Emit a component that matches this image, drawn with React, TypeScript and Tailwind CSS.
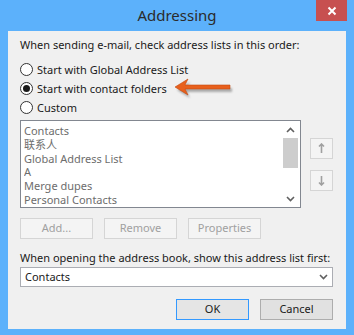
import React from "react";

const font = { fontFamily: '"Noto Sans", "Noto Sans CJK SC", sans-serif' };

function Radio({ checked, label }: { checked?: boolean; label: string }) {
  return (
    <div className="flex items-center h-[19px]">
      <div className="w-[13px] h-[13px] rounded-full border border-[#333333] bg-white flex items-center justify-center">
        {checked && <div className="w-[7px] h-[7px] rounded-full bg-[#1a1a1a]" />}
      </div>
      <span className="ml-[4px] text-[11px] text-[#1a1a1a] leading-[16px]">{label}</span>
    </div>
  );
}

function Chevron({ up }: { up?: boolean }) {
  return (
    <svg width="9" height="6" viewBox="0 0 9 6">
      <path d={up ? "M1 5 L4.5 1.5 L8 5" : "M1 1 L4.5 4.5 L8 1"} stroke="#606060" strokeWidth="1.6" fill="none" />
    </svg>
  );
}

function DisabledButton({ label }: { label: string }) {
  return (
    <div className="w-[73px] h-[21px] border border-[#d5d5d5] bg-[#f4f4f4] flex items-center justify-center text-[11px] text-[#a0a0a0]">
      {label}
    </div>
  );
}

export default function App() {
  const items = ["Contacts", "联系人", "Global Address List", "A", "Merge dupes", "Personal Contacts"];
  return (
    <div className="w-[354px] h-[335px] bg-[#5cb1fb] flex flex-col overflow-hidden" style={font}>
      <div className="h-[31px] shrink-0 relative flex items-center justify-center">
        <span className="text-[15px] text-[#2b2b2b]">Addressing</span>
        <div className="absolute right-[7px] top-0 w-[31px] h-[21px] bg-[#c75050] flex items-center justify-center">
          <svg width="10" height="10" viewBox="0 0 10 10">
            <path d="M1.5 1.5 L8.5 8.5 M8.5 1.5 L1.5 8.5" stroke="white" strokeWidth="2" />
          </svg>
        </div>
      </div>
      <div className="mx-[8px] mb-[6px] flex-1 min-h-0 bg-[#f0f0f0] pl-[12px] pr-[13px] pt-[6px] flex flex-col relative">
        <div className="text-[11px] text-[#1a1a1a] leading-[16px]">When sending e-mail, check address lists in this order:</div>
        <div className="mt-[7px] flex flex-col">
          <Radio label="Start with Global Address List" />
          <Radio checked label="Start with contact folders" />
          <Radio label="Custom" />
        </div>
        <div className="mt-[3px] flex">
          <div className="w-[281px] h-[88px] border border-[#828790] bg-white flex overflow-hidden">
            <div className="flex-1 pl-[3px] pt-[3px] flex flex-col">
              {items.map((t) => (
                <div key={t} className="h-[14px] leading-[14px] text-[11px] text-[#6d6d6d] overflow-hidden">{t}</div>
              ))}
            </div>
            <div className="w-[16px] mr-[2px] flex flex-col items-center">
              <div className="h-[17px] flex items-center justify-center"><Chevron up /></div>
              <div className="w-[15px] h-[30px] bg-[#cdcdcd]" />
              <div className="flex-1" />
              <div className="h-[17px] flex items-center justify-center"><Chevron /></div>
            </div>
          </div>
          <div className="ml-[9px] pt-[18px] flex flex-col gap-[11px]">
            {[true, false].map((up) => (
              <div key={String(up)} className="w-[23px] h-[21px] border border-[#d5d5d5] bg-[#f4f4f4] flex items-center justify-center">
                <svg width="7" height="11" viewBox="0 0 7 11">
                  {up ? (
                    <path d="M3.5 1 L3.5 10 M1 3.5 L3.5 1 L6 3.5" stroke="#a0a0a0" strokeWidth="1.6" fill="none" />
                  ) : (
                    <path d="M3.5 1 L3.5 10 M1 7.5 L3.5 10 L6 7.5" stroke="#a0a0a0" strokeWidth="1.6" fill="none" />
                  )}
                </svg>
              </div>
            ))}
          </div>
        </div>
        <div className="mt-[10px] flex gap-[11px]">
          <DisabledButton label="Add..." />
          <DisabledButton label="Remove" />
          <DisabledButton label="Properties" />
        </div>
        <div className="mt-[11px] text-[11px] text-[#1a1a1a] leading-[16px] whitespace-nowrap">When opening the address book, show this address list first:</div>
        <div className="mt-[1px] h-[20px] border border-[#abadb3] bg-white flex items-center pl-[4px] pr-[4px]">
          <span className="flex-1 text-[11px] text-[#1a1a1a]">Contacts</span>
          <Chevron />
        </div>
        <div className="mt-[12px] flex justify-end gap-[11px]">
          <div className="w-[73px] h-[21px] border border-[#3399ff] bg-[#e5e5e5] flex items-center justify-center text-[11px] text-[#1a1a1a]">OK</div>
          <div className="w-[73px] h-[21px] border border-[#adadad] bg-[#e1e1e1] flex items-center justify-center text-[11px] text-[#1a1a1a]">Cancel</div>
        </div>
        <svg className="absolute left-[166px] top-[46px]" width="70" height="22" viewBox="0 0 70 22">
          <defs>
            <filter id="sh" x="-20%" y="-50%" width="140%" height="200%">
              <feGaussianBlur stdDeviation="1.2" />
            </filter>
          </defs>
          <g transform="translate(2,3)" filter="url(#sh)" opacity="0.45">
            <path d="M1 10 L14 2 L11 8 L56 8 L56 12 L11 12 L14 18 Z" fill="#555" />
          </g>
          <path d="M1 10 L14 2 L11 8 L56 8 L56 12 L11 12 L14 18 Z" fill="#e8601c" stroke="#c24a10" strokeWidth="0.6" />
        </svg>
      </div>
    </div>
  );
}
